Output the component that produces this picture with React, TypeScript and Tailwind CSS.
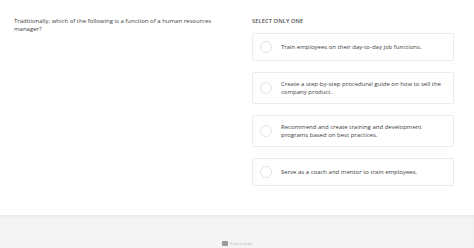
const options = [
  "Train employees on their day-to-day job functions.",
  "Create a step-by-step procedural guide on how to sell the company product.",
  "Recommend and create training and development programs based on best practices.",
  "Serve as a coach and mentor to train employees.",
];

export default function App() {
  return (
    <div className="min-h-screen bg-white font-['Open_Sans',sans-serif] text-[#404040]">
      <div className="flex h-[215px] gap-[18px] pl-[14px] pt-[17px]">
        <div className="w-[220px] pr-[8px] text-[6px] leading-[8px]">
          Traditionally, which of the following is a function of a human resources manager?
        </div>

        <div className="w-[202px]">
          <div className="text-[5.7px] font-semibold leading-[8px] tracking-[0.1px] text-[#505050]">
            SELECT ONLY ONE
          </div>
          <div className="mt-[8px] flex flex-col gap-[11px]">
            {options.map((text) => (
              <div
                key={text}
                className="flex items-center gap-[9px] rounded-[2px] border border-[#ececec] bg-white py-[7px] pl-[7px] pr-[10px]"
              >
                <div className="h-[12px] w-[12px] shrink-0 rounded-full border border-[#e4e4e4]" />
                <div className="text-[6px] leading-[8px]">{text}</div>
              </div>
            ))}
          </div>
        </div>
      </div>

      <footer className="h-[60px] bg-[#f4f4f4] shadow-[inset_0_3px_4px_-2px_rgba(0,0,0,0.06)]">
        <div className="flex flex-col items-center pt-[26px] text-[#b5b5b5]">
          <div className="flex items-center gap-[2px] text-[4px] leading-[5px]">
            <div className="h-[5px] w-[6px] rounded-[1px] bg-[#9a9a9a]" />
            <span>Powered by</span>
          </div>
        </div>
      </footer>
    </div>
  );
}
